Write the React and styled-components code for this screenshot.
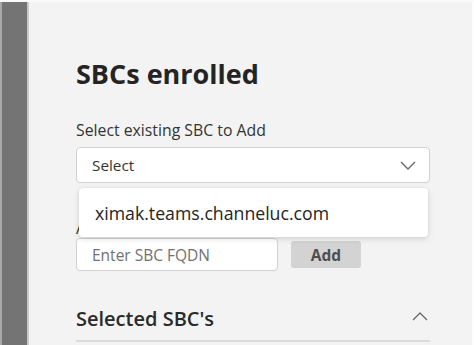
import React from "react";
import styled, { createGlobalStyle } from "styled-components";

const Global = createGlobalStyle`
  html, body { margin: 0; padding: 0; background: #f3f3f3; }
  body { font-family: "Open Sans", "Noto Sans", sans-serif; }
`;

const Frame = styled.div`
  display: flex;
  width: 474px;
  height: 345px;
  overflow: hidden;
  border-top: 2px solid #fafafa;
  box-sizing: border-box;
`;

const Rail = styled.div`
  width: 25px;
  flex: none;
  background: #747474;
  border-left: 2px solid #a9a9a9;
  border-right: 2px solid #c9c9c9;
`;

const Panel = styled.div`
  flex: 1;
  background: #f3f3f3;
  border-right: 2px solid #fdfdfd;
  padding: 0 40px 0 47px;
  display: flex;
  flex-direction: column;
`;

const Title = styled.h1`
  margin: 54px 0 0;
  font-size: 27px;
  line-height: 36px;
  font-weight: 700;
  color: #242424;
`;

const Label = styled.div`
  margin-top: ${(p) => p.$mt}px;
  font-size: 15.8px;
  line-height: 20px;
  color: #333;
`;

const Field = styled.div`
  position: relative;
  margin-top: 7px;
  width: 354px;
`;

const SelectBox = styled.div`
  height: 36px;
  box-sizing: border-box;
  border: 1px solid #d2d2d2;
  border-radius: 4px;
  background: #fff;
  display: flex;
  align-items: center;
  justify-content: space-between;
  padding: 0 13px 0 15px;
  font-size: 15.3px;
  color: #333;
`;

const Menu = styled.div`
  position: absolute;
  top: 41px;
  left: 3px;
  right: 2px;
  height: 49px;
  background: #fff;
  border-radius: 4px;
  box-shadow: 0 2px 6px rgba(0, 0, 0, 0.13), 0 0 2px rgba(0, 0, 0, 0.08);
  display: flex;
  align-items: center;
  padding-left: 16px;
  font-size: 17.7px;
  color: #242424;
  z-index: 2;
`;

const Row = styled.div`
  display: flex;
  align-items: center;
  gap: 13px;
`;

const Input = styled.div`
  width: 202px;
  height: 33px;
  box-sizing: border-box;
  border: 1px solid #d2d2d2;
  border-radius: 4px;
  background: #fff;
  display: flex;
  align-items: center;
  padding-left: 15px;
  font-size: 15.5px;
  color: #717171;
`;

const Button = styled.div`
  width: 70px;
  height: 27px;
  border-radius: 3px;
  background: #d3d3d3;
  color: #4e4e4e;
  font-size: 15.5px;
  font-weight: 700;
  display: flex;
  align-items: center;
  justify-content: center;
`;

const SectionHead = styled.div`
  margin-top: 26px;
  width: 354px;
  height: 45px;
  box-sizing: border-box;
  border-bottom: 2px solid #dcdcdc;
  display: flex;
  align-items: center;
  justify-content: space-between;
  padding-right: 2px;
`;

const SectionTitle = styled.div`
  font-size: 20px;
  font-weight: 600;
  line-height: 28px;
  color: #2a2a2a;
`;

const Chevron = ({ up }) => (
  <svg width="16" height="9" viewBox="0 0 16 9" style={{ marginTop: up ? -4 : 0 }}>
    <path
      d={up ? "M1 8 L8 1 L15 8" : "M1 1 L8 8 L15 1"}
      fill="none"
      stroke="#6a6a6a"
      strokeWidth="1.4"
    />
  </svg>
);

export default function App() {
  return (
    <>
      <Global />
      <Frame>
        <Rail />
        <Panel>
          <Title>SBCs enrolled</Title>
          <Label $mt={28}>Select existing SBC to Add</Label>
          <Field>
            <SelectBox>
              <span>Select</span>
              <Chevron />
            </SelectBox>
            <Menu>ximak.teams.channeluc.com</Menu>
          </Field>
          <Label $mt={35}>Add new SBC</Label>
          <Row>
            <Input>Enter SBC FQDN</Input>
            <Button>Add</Button>
          </Row>
          <SectionHead>
            <SectionTitle>Selected SBC's</SectionTitle>
            <Chevron up />
          </SectionHead>
        </Panel>
      </Frame>
    </>
  );
}
